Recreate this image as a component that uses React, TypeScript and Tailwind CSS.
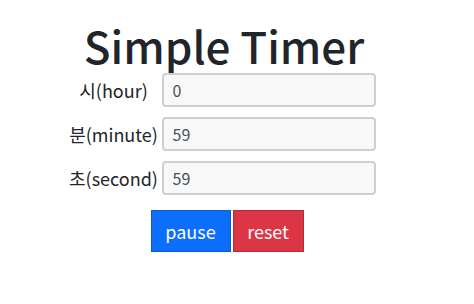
export default function App() {
  const rows = [
    { label: "시(hour)", value: "0" },
    { label: "분(minute)", value: "59" },
    { label: "초(second)", value: "59" },
  ]

  return (
    <div
      className="w-[448px] flex flex-col items-center bg-white text-[#212529]"
      style={{ fontFamily: '"Noto Sans CJK KR", "Noto Sans", sans-serif' }}
    >
      <h1 className="mt-[12px] text-[44px] leading-[66px] font-medium">Simple Timer</h1>

      <div className="mt-[-5px] ml-[-5px] flex flex-col gap-[10px]">
        {rows.map((r) => (
          <div key={r.label} className="flex items-center gap-[2px]">
            <span className="w-[92px] text-center text-[18px] leading-[34px] whitespace-nowrap">{r.label}</span>
            <input
              readOnly
              value={r.value}
              className="w-[214px] h-[34px] rounded-[4px] border-2 border-[#cfcfcf] bg-[#f8f8f8] px-[9px] text-[16px] text-[#495057] outline-none"
            />
          </div>
        ))}
      </div>

      <div className="mt-[15px] ml-[6px] flex gap-[2px]">
        <button className="w-[80px] h-[42px] bg-[#0d6efd] border border-[#0a58ca] text-white text-[18px]">
          pause
        </button>
        <button className="w-[71px] h-[42px] bg-[#dc3545] border border-[#b02a37] text-white text-[18px]">
          reset
        </button>
      </div>
    </div>
  )
}
